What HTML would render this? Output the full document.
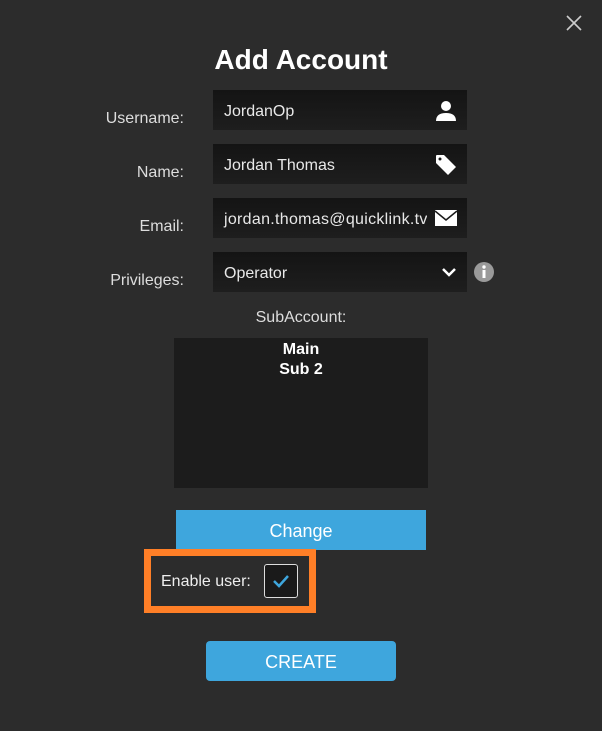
<!DOCTYPE html>
<html><head><style>
body{margin:0;width:602px;height:731px;background:#2c2c2c;font-family:"Liberation Sans",sans-serif;color:#eee;position:relative;overflow:hidden}
.a{position:absolute}
.lbl{position:absolute;right:418px;font-size:16px;color:#ddd}
.f{position:absolute;left:213px;width:254px;height:40px;background:linear-gradient(#141414,#1e1e1e);font-size:16px;color:#e8e8e8;line-height:43px;box-sizing:border-box;padding-left:11px;overflow:hidden;white-space:nowrap}
.ic{position:absolute;right:10px;top:10px}
</style></head><body>
<svg class="a" style="left:566px;top:15px" width="16" height="16"><path d="M1 1L15 15M15 1L1 15" stroke="#ccc" stroke-width="1.6"/></svg>
<div class="a" style="left:0;width:602px;top:44px;text-align:center;font-size:28px;font-weight:bold;color:#fff">Add Account</div>
<div class="lbl" style="top:110px">Username:</div>
<div class="lbl" style="top:164px">Name:</div>
<div class="lbl" style="top:218px">Email:</div>
<div class="lbl" style="top:272px">Privileges:</div>
<div class="f" style="top:90px">JordanOp<svg class="ic" width="22" height="22" viewBox="0 0 22 22"><circle cx="11" cy="6" r="5" fill="#fff"/><path d="M1 21Q1 13 11 13Q21 13 21 21Z" fill="#fff"/></svg></div>
<div class="f" style="top:144px">Jordan Thomas<svg class="ic" width="22" height="22" viewBox="0 0 22 22"><path d="M1 2Q1 1 2 1H9L21 13L13 21L1 9Z" fill="#fff"/><circle cx="5" cy="5" r="1.5" fill="#1a1a1a"/></svg></div>
<div class="f" style="top:198px;padding-right:40px;letter-spacing:0.3px">jordan.thomas@quicklink.tv<svg class="ic" style="top:12px;background:#1a1a1a;box-shadow:-8px 0 0 #1a1a1a" width="22" height="16" viewBox="0 0 22 16"><rect width="22" height="16" fill="#fff"/><path d="M0 1L11 10L22 1" stroke="#1a1a1a" stroke-width="1.5" fill="none"/></svg></div>
<div class="f" style="top:252px">Operator<svg class="ic" style="top:15px" width="16" height="10" viewBox="0 0 16 10"><path d="M2 2L8 8L14 2" stroke="#fff" stroke-width="2.5" fill="none"/></svg></div>
<svg class="a" style="left:474px;top:262px" width="20" height="20"><circle cx="10" cy="10" r="10" fill="#9a9a9a"/><rect x="8.5" y="8" width="3" height="8" fill="#fff"/><circle cx="10" cy="5" r="1.7" fill="#fff"/></svg>
<div class="a" style="left:174px;width:254px;top:309px;text-align:center;font-size:16px;color:#ddd">SubAccount:</div>
<div class="a" style="left:174px;top:338px;width:254px;height:150px;background:#1c1c1c;text-align:center;font-size:16px;font-weight:bold;line-height:20px;color:#fff;padding-top:2px;box-sizing:border-box">Main<br>Sub 2</div>
<div class="a" style="left:176px;top:510px;width:250px;height:40px;background:#3ea6dd;text-align:center;line-height:42px;font-size:18px;color:#fff">Change</div>
<div class="a" style="left:144px;top:549px;width:172px;height:64px;border:7px solid #ff7f27;box-sizing:border-box;background:#2c2c2c"></div>
<div class="a" style="left:161px;top:573px;font-size:16px;color:#eee">Enable user:</div>
<div class="a" style="left:264px;top:564px;width:34px;height:34px;box-sizing:border-box;border:1px solid #ddd;border-radius:3px;background:#1a1a1a"><svg width="32" height="32"><path d="M9 16L14 21L23 11" stroke="#3ea6dd" stroke-width="2.5" fill="none"/></svg></div>
<div class="a" style="left:206px;top:641px;width:190px;height:40px;border-radius:4px;background:#3ea6dd;text-align:center;line-height:43px;font-size:18px;color:#fff">CREATE</div>
</body></html>
